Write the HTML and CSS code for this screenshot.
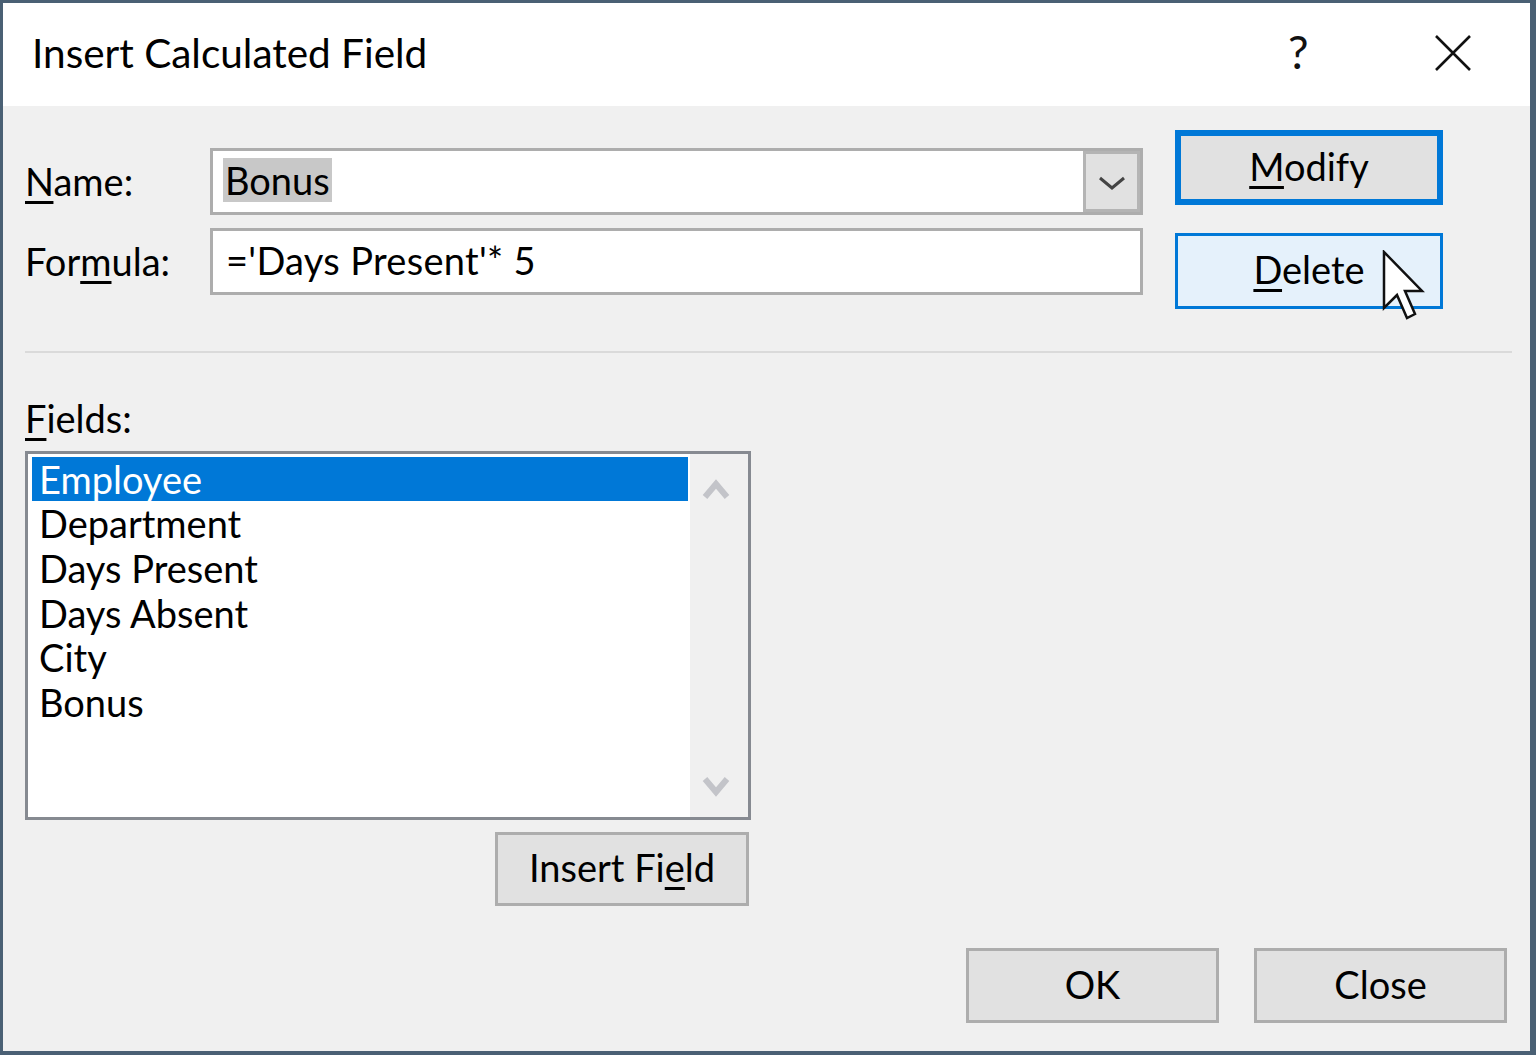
FILE: index.html
```html
<!DOCTYPE html>
<html lang="en">
<head>
    <meta charset="UTF-8">
    <title>Insert Calculated Field</title>
    <link rel="stylesheet" href="styles.css">
</head>
<body>
    <div class="dialog">
        <div class="titlebar">
            <span class="title">Insert Calculated Field</span>
            <span class="help">?</span>
            <svg class="close" width="38" height="38" viewBox="0 0 38 38">
                <path d="M2 2 L36 36 M36 2 L2 36" stroke="#111" stroke-width="2.6" fill="none"/>
            </svg>
        </div>

        <div class="content">
            <div class="top">
                <div class="form">
                    <div class="row">
                        <label class="label"><u>N</u>ame:</label>
                        <div class="field combo">
                            <span class="value"><span class="selected-text">Bonus</span></span>
                            <span class="drop">
                                <svg width="28" height="16" viewBox="0 0 28 16">
                                    <path d="M2 3 L14 13 L26 3" stroke="#444" stroke-width="3" fill="none"/>
                                </svg>
                            </span>
                        </div>
                    </div>
                    <div class="row">
                        <label class="label">For<u>m</u>ula:</label>
                        <div class="field">
                            <span class="value">='Days Present'* 5</span>
                        </div>
                    </div>
                </div>
                <div class="side-buttons">
                    <button class="btn btn-default"><u>M</u>odify</button>
                    <button class="btn btn-hover">
                        <u>D</u>elete
                        <svg class="cursor" width="44" height="70" viewBox="0 0 44 70">
                            <path d="M2 2 L2 58 L15 45 L25 68 L33 64 L23 41 L40 41 Z" fill="#fff" stroke="#111" stroke-width="2.5" stroke-linejoin="miter"/>
                        </svg>
                    </button>
                </div>
            </div>

            <div class="separator"></div>

            <div class="fields-label"><u>F</u>ields:</div>
            <div class="fields-area">
                <div class="listbox">
                    <ul class="items">
                        <li class="active">Employee</li>
                        <li>Department</li>
                        <li>Days Present</li>
                        <li>Days Absent</li>
                        <li>City</li>
                        <li>Bonus</li>
                    </ul>
                    <div class="scrollbar">
                        <svg width="28" height="24" viewBox="0 0 28 24">
                            <path d="M3 20 L14 7 L25 20" stroke="#c3c4c9" stroke-width="6" fill="none"/>
                        </svg>
                        <svg width="28" height="24" viewBox="0 0 28 24">
                            <path d="M3 4 L14 17 L25 4" stroke="#c3c4c9" stroke-width="6" fill="none"/>
                        </svg>
                    </div>
                </div>
                <button class="btn btn-insert">Insert Fi<u>e</u>ld</button>
            </div>

            <div class="footer">
                <button class="btn btn-footer">OK</button>
                <button class="btn btn-footer">Close</button>
            </div>
        </div>
    </div>
</body>
</html>
```

FILE: styles.css
```css
/* Base */

* {
    box-sizing: border-box;
}

body {
    margin: 0;
    font-family: "Segoe UI", Lato, "Open Sans", sans-serif;
    color: #000;
}

u {
    text-decoration-thickness: 3px;
    text-underline-offset: 5px;
}

.dialog {
    width: 1536px;
    height: 1055px;
    border-style: solid;
    border-color: #4a6074;
    border-width: 3px 6px 4px 3px;
    background-color: #f0f0f0;
    display: flex;
    flex-direction: column;
}

/* Title bar */

.titlebar {
    height: 103px;
    background-color: #fff;
    display: flex;
    align-items: center;
    padding-left: 29px;
    flex-shrink: 0;
}

.title {
    font-size: 40.5px;
    flex: 1;
    padding-bottom: 4px;
}

.help {
    font-size: 46px;
    width: 30px;
    margin-right: 116px;
    padding-bottom: 6px;
    color: #111;
}

.close {
    margin-right: 58px;
    margin-bottom: 4px;
}

/* Content */

.content {
    flex: 1;
    padding: 24px 18px 0 22px;
    font-size: 38px;
}

.top {
    display: flex;
    gap: 32px;
}

.form {
    margin-top: 18px;
    display: flex;
    flex-direction: column;
    gap: 13px;
}

.row {
    display: flex;
    align-items: center;
}

.label {
    width: 185px;
    padding-bottom: 2px;
}

.field {
    width: 933px;
    height: 67px;
    border: 3px solid #adadad;
    background-color: #fff;
    display: flex;
    align-items: center;
}

.field .value {
    flex: 1;
    padding-left: 13px;
    padding-bottom: 3px;
    letter-spacing: 0.3px;
}

.selected-text {
    background-color: #c8c8c8;
    padding: 0 2px;
    margin-left: -3px;
    line-height: 44px;
    display: inline-block;
    letter-spacing: 0;
}

.drop {
    width: 57px;
    height: 100%;
    border: 3px solid #b4b4b4;
    background-color: #e1e1e1;
    display: flex;
    align-items: center;
    justify-content: center;
}

.drop svg {
    margin-top: 2px;
}

.side-buttons {
    display: flex;
    flex-direction: column;
    gap: 28px;
}

.btn {
    font: inherit;
    color: #000;
    background-color: #e1e1e1;
    border: 3px solid #adadad;
    padding: 0 0 4px;
    cursor: default;
}

.btn-default,
.btn-hover {
    width: 268px;
    height: 75px;
}

.btn-default {
    border: 6px solid #0078d7;
}

.btn-hover {
    height: 76px;
    position: relative;
    border-color: #0078d7;
    background-color: #e5f1fb;
}

.cursor {
    position: absolute;
    left: 204px;
    top: 14px;
}

.separator {
    margin-top: 42px;
    height: 2px;
    background-color: #dadada;
}

.fields-label {
    margin-top: 43px;
    line-height: 45px;
}

.fields-area {
    margin-top: 10px;
    width: 726px;
    display: flex;
    flex-direction: column;
    align-items: flex-end;
}

.listbox {
    width: 726px;
    height: 369px;
    border: 3px solid #868a91;
    background-color: #fff;
    display: flex;
}

.items {
    list-style: none;
    margin: 0;
    padding: 3px 0 0 4px;
    flex: 1;
}

.items li {
    line-height: 44.75px;
    padding-left: 7px;
    margin-right: 2px;
    white-space: nowrap;
}

.items li.active {
    background-color: #0078d7;
    color: #fff;
    height: 44px;
}

.scrollbar {
    width: 58px;
    background-color: #f0f0f0;
    display: flex;
    flex-direction: column;
    justify-content: space-between;
    align-items: center;
    padding: 23px 6px 18px 0;
}

.btn-insert {
    margin-top: 12px;
    margin-right: 2px;
    width: 254px;
    height: 74px;
}

.footer {
    margin-top: 42px;
    padding-right: 5px;
    display: flex;
    justify-content: flex-end;
    gap: 35px;
}

.btn-footer {
    width: 253px;
    height: 75px;
}
```
